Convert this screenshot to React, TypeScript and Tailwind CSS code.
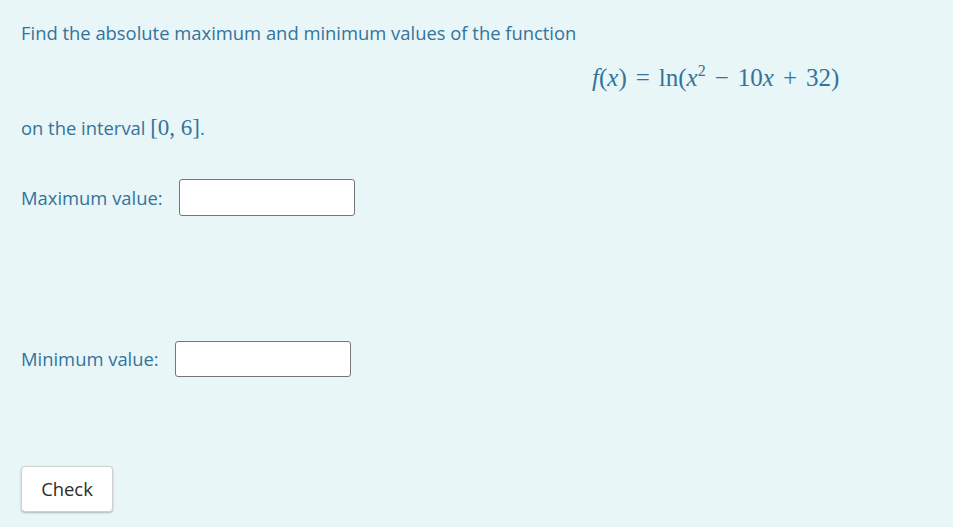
export default function App() {
  return (
    <div className="min-h-[527px] w-full bg-[#e8f6f8] text-[#33739c] font-['Open_Sans',sans-serif] text-[18.4px]">
      <div className="flex flex-col pl-[21px] pt-[19px]">
        <p className="leading-[28px]">Find the absolute maximum and minimum values of the function</p>
        <div className="mt-[16px] pl-[571px] font-['Liberation_Serif',serif] text-[25px] leading-[30px] whitespace-nowrap">
          <i>f</i>(<i>x</i>)<span className="mx-[9px]">=</span>ln(<i>x</i>
          <sup className="relative -top-[10px] text-[16px]">2</sup>
          <span className="mx-[9px]">−</span>10<i>x</i>
          <span className="mx-[9px]">+</span>32)
        </div>
        <p className="mt-[20px] leading-[30px]">
          on the interval <span className="font-['Liberation_Serif',serif] text-[23px]">[0, 6]</span>.
        </p>
        <div className="mt-[36px] flex items-center gap-[16px]">
          <span>Maximum value:</span>
          <input className="h-[37px] w-[176px] rounded-[3px] border border-[#767676] bg-white" />
        </div>
        <div className="mt-[125px] flex items-center gap-[16px]">
          <span>Minimum value:</span>
          <input className="h-[36px] w-[176px] rounded-[3px] border border-[#767676] bg-white" />
        </div>
        <div className="mt-[89px]">
          <button className="h-[46px] w-[92px] rounded-[4px] border border-[#d0d0d0] bg-white text-[#2b2b2b] shadow-[0_1px_2px_rgba(0,0,0,0.25)]">
            Check
          </button>
        </div>
      </div>
    </div>
  );
}
